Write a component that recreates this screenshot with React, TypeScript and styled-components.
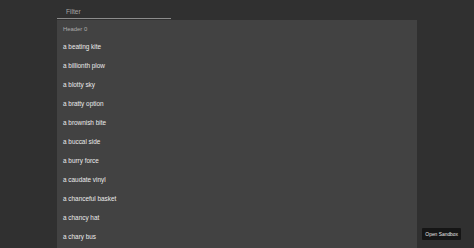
import React from 'react';
import styled, { createGlobalStyle } from 'styled-components';

const GlobalStyle = createGlobalStyle`
    html, body {
        margin: 0;
        padding: 0;
        background: #303030;
        height: 100%;
        overflow: hidden;
    }
    body {
        font-family: "Liberation Sans", Arial, sans-serif;
    }
`;

const Page = styled.div`
    width: 360px;
    margin: 0 auto;
    display: flex;
    flex-direction: column;
    height: 248px;
`;

const FilterField = styled.div`
    width: 114px;
    height: 19px;
    box-sizing: border-box;
    border-bottom: 1px solid #8c8c8c;
    display: flex;
    align-items: flex-end;
    padding: 0 0 2px 9px;
`;

const FilterInput = styled.input`
    background: transparent;
    border: none;
    outline: none;
    padding: 0;
    width: 100%;
    font-family: "Liberation Sans", Arial, sans-serif;
    font-size: 6.6px;
    line-height: 8px;
    color: #e0e0e0;

    &::placeholder {
        color: #a6a6a6;
        opacity: 1;
    }
`;

const Panel = styled.div`
    flex: 1;
    background: #424242;
    overflow: hidden;
    margin-top: 1px;
`;

const SubHeader = styled.div`
    height: 17px;
    padding-left: 6px;
    display: flex;
    align-items: center;
    font-size: 5.9px;
    color: #acacac;
`;

const Item = styled.div`
    height: 19px;
    padding-left: 6px;
    display: flex;
    align-items: center;
    font-size: 6.4px;
    color: #ececec;
`;

const SandboxButton = styled.button`
    position: fixed;
    right: 13px;
    bottom: 8px;
    background: #151515;
    color: #e8e8e8;
    border: none;
    border-radius: 1px;
    padding: 0 3px;
    height: 12px;
    font-family: "Liberation Sans", Arial, sans-serif;
    font-size: 4.9px;
    cursor: pointer;
`;

const items = [
    'a beating kite',
    'a billionth plow',
    'a blotty sky',
    'a bratty option',
    'a brownish bite',
    'a buccal side',
    'a burry force',
    'a caudate vinyl',
    'a chanceful basket',
    'a chancy hat',
    'a chary bus',
];

const App: React.FC = () => {
    return (
        <>
            <GlobalStyle />
            <Page>
                <FilterField>
                    <FilterInput placeholder="Filter" />
                </FilterField>
                <Panel>
                    <SubHeader>Header 0</SubHeader>
                    {items.map((item) => (
                        <Item key={item}>{item}</Item>
                    ))}
                </Panel>
            </Page>
            <SandboxButton>Open Sandbox</SandboxButton>
        </>
    );
};

export default App;
